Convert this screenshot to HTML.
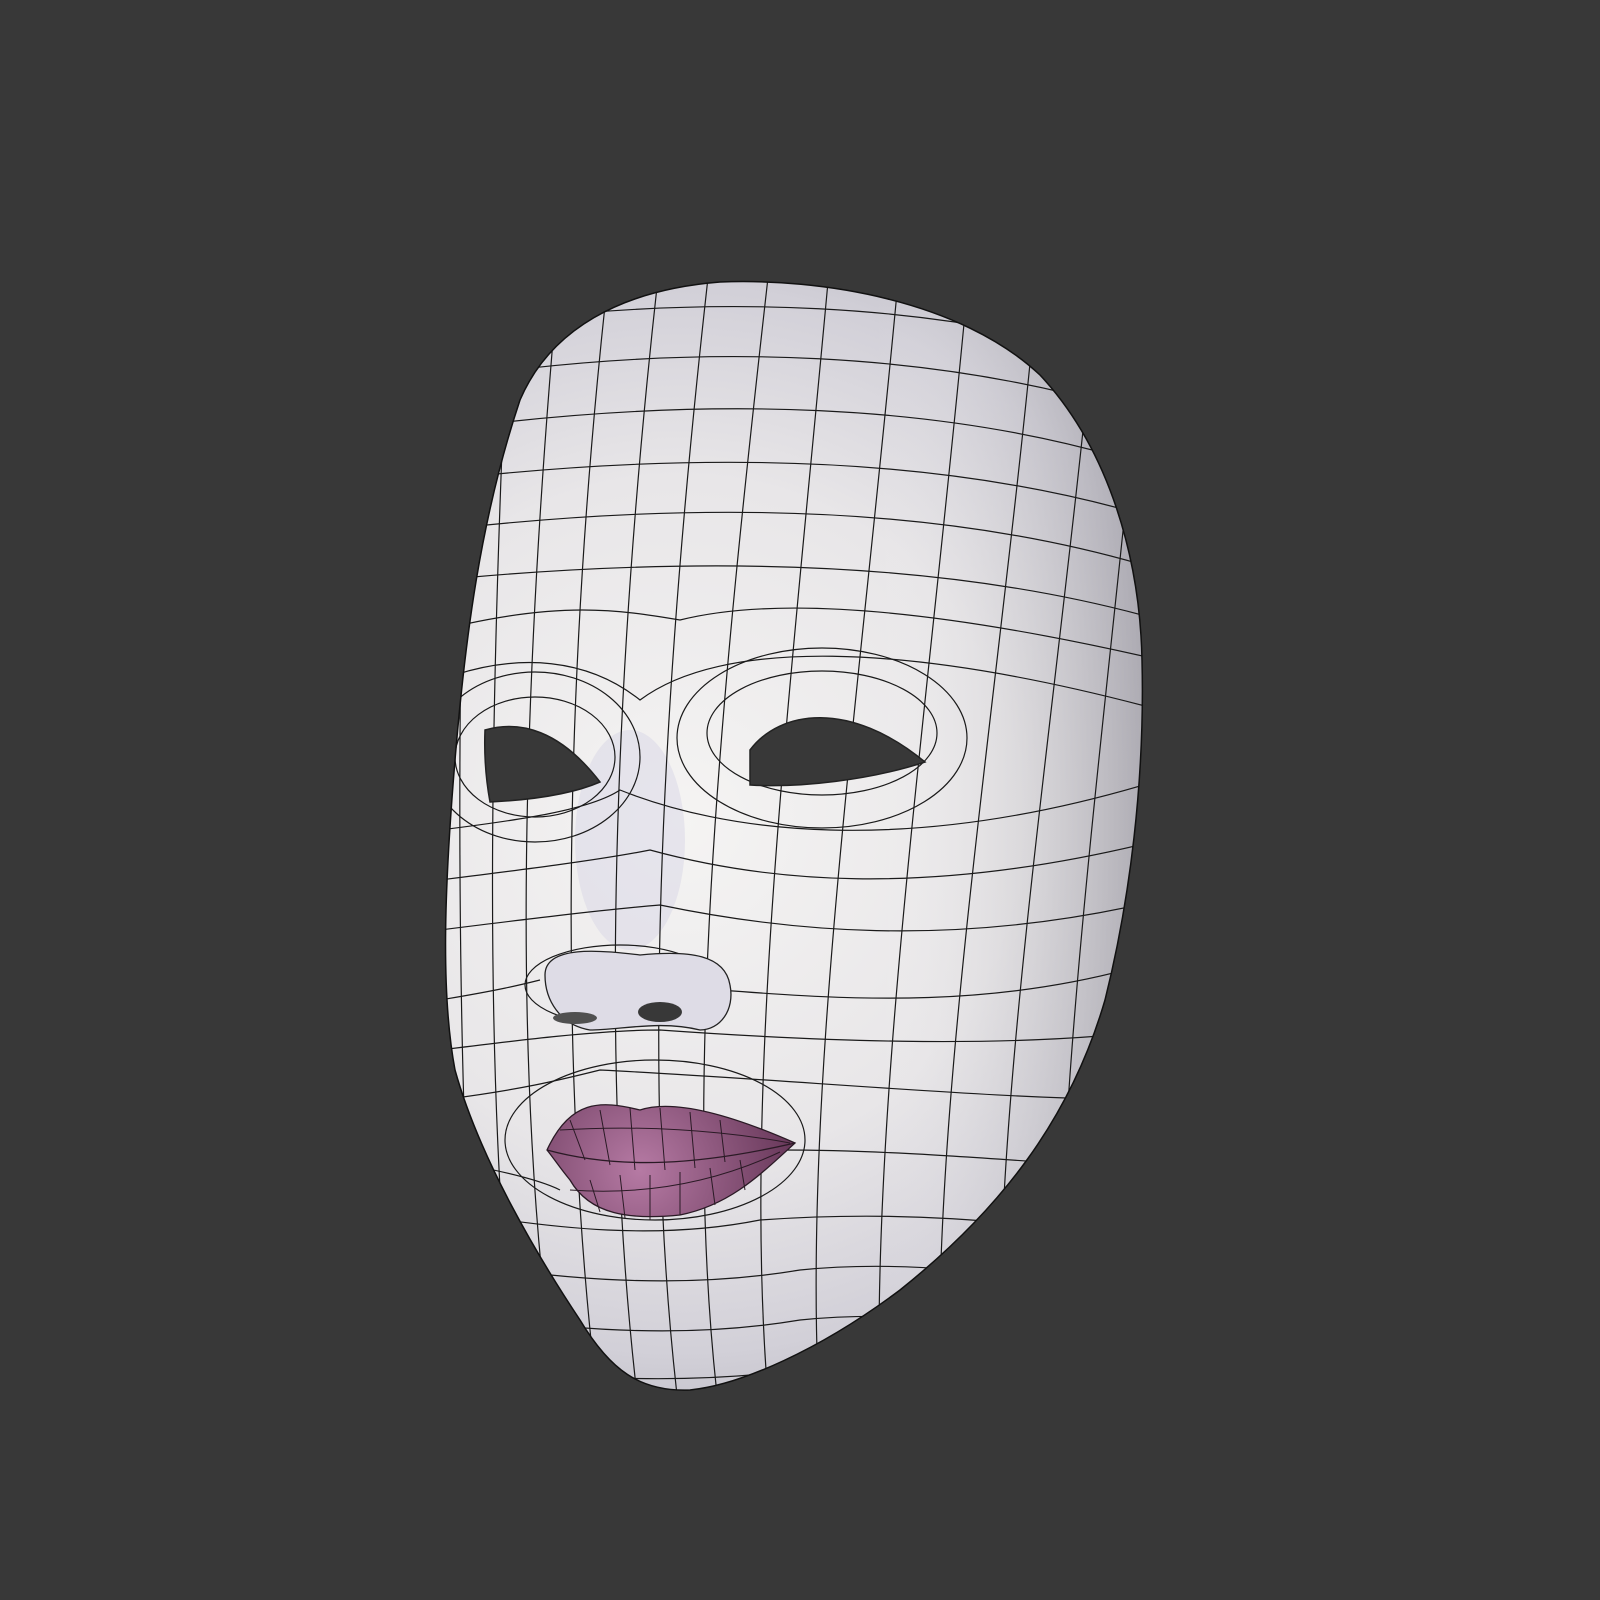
<!DOCTYPE html>
<html><head><style>
html,body{margin:0;padding:0;background:#383838;width:1600px;height:1600px;overflow:hidden}
svg{display:block}
</style></head><body>
<svg width="1600" height="1600" viewBox="0 0 1600 1600" xmlns="http://www.w3.org/2000/svg">
<defs>
<radialGradient id="g1" cx="680" cy="820" r="760" gradientUnits="userSpaceOnUse">
<stop offset="0" stop-color="#f5f4f3"/>
<stop offset="0.45" stop-color="#e8e6e8"/>
<stop offset="0.7" stop-color="#d2d0d8"/>
<stop offset="1" stop-color="#a4a2ac"/>
</radialGradient>
<linearGradient id="g2" x1="440" y1="0" x2="1160" y2="0" gradientUnits="userSpaceOnUse">
<stop offset="0" stop-color="#fff" stop-opacity="0"/>
<stop offset="0.6" stop-color="#fff" stop-opacity="0"/>
<stop offset="1" stop-color="#6a6872" stop-opacity="0.45"/>
</linearGradient>
<radialGradient id="lip" cx="640" cy="1170" r="150" gradientUnits="userSpaceOnUse">
<stop offset="0" stop-color="#b67aa4"/>
<stop offset="1" stop-color="#6a3a5c"/>
</radialGradient>
<clipPath id="mask">
<path id="outline" d="M720 282 C820 278 960 300 1040 375 C1110 450 1140 560 1142 660 C1145 780 1130 900 1105 1000 C1070 1120 1000 1210 900 1290 C820 1350 740 1385 690 1390 C640 1392 610 1370 580 1320 C540 1260 480 1160 455 1070 C440 990 445 880 455 760 C465 640 480 520 520 400 C550 330 620 290 720 282 Z"/>
</clipPath>
</defs>
<rect width="1600" height="1600" fill="#383838"/>
<g clip-path="url(#mask)">
<rect width="1600" height="1600" fill="url(#g1)"/>
<rect x="440" y="270" width="720" height="1130" fill="url(#g2)"/>
<ellipse cx="630" cy="840" rx="55" ry="110" fill="#d8d6e6" opacity="0.5"/>
<g fill="none" stroke="#1a1a1a" stroke-width="1.2">
<path d="M440 330 C700 290 950 300 1160 370"/>
<path d="M440 380 C700 340 950 350 1160 420"/>
<path d="M440 430 C700 395 950 400 1160 470"/>
<path d="M440 480 C700 450 950 455 1160 520"/>
<path d="M440 530 C700 500 950 505 1160 570"/>
<path d="M440 580 C700 555 950 560 1160 620"/>
<path d="M440 630 C560 600 620 610 680 620 C760 600 900 600 1160 660"/>
<path d="M440 680 C520 650 590 660 640 700 C720 640 900 640 1160 710"/>
<path d="M440 830 C520 820 590 810 620 790 C720 830 900 860 1160 780"/>
<path d="M440 880 C520 870 600 860 650 850 C760 880 920 900 1160 840"/>
<path d="M440 930 C520 920 600 910 660 905 C780 930 950 950 1160 900"/>
<path d="M440 1000 C500 990 520 985 540 980 M720 990 C850 1000 1000 1010 1160 960"/>
<path d="M440 1050 C520 1040 600 1030 660 1030 C800 1040 1000 1050 1160 1030"/>
<path d="M440 1100 C520 1090 560 1080 600 1070 C800 1080 1000 1100 1160 1100"/>
<path d="M440 1160 C500 1170 540 1180 560 1190 M780 1150 C900 1150 1000 1160 1160 1170"/>
<path d="M440 1210 C560 1230 660 1240 760 1220 C900 1210 1000 1220 1160 1240"/>
<path d="M440 1260 C560 1280 680 1290 800 1270 C900 1260 1000 1270 1160 1300"/>
<path d="M440 1310 C560 1330 680 1340 800 1320 C900 1310 1000 1320 1160 1350"/>
<path d="M440 1360 C560 1380 680 1385 800 1370"/>
<path d="M470 260 C455 700 455 1100 480 1420"/>
<path d="M510 260 C490 700 480 1100 520 1420"/>
<path d="M560 260 C520 700 510 1100 560 1420"/>
<path d="M610 260 C560 700 560 1100 600 1420"/>
<path d="M660 260 C610 700 600 1100 640 1420"/>
<path d="M710 260 C660 700 640 1100 680 1420"/>
<path d="M770 260 C720 700 680 1100 720 1420"/>
<path d="M830 260 C790 700 740 1100 770 1420"/>
<path d="M900 260 C860 700 800 1100 820 1420"/>
<path d="M970 260 C930 700 870 1100 880 1420"/>
<path d="M1040 260 C1000 700 930 1100 940 1420"/>
<path d="M1100 260 C1060 700 990 1100 1000 1420"/>
<path d="M1150 260 C1110 700 1050 1100 1060 1420"/>
<ellipse cx="535" cy="757" rx="80" ry="60"/>
<ellipse cx="535" cy="757" rx="105" ry="85"/>
<ellipse cx="822" cy="733" rx="115" ry="62"/>
<ellipse cx="822" cy="738" rx="145" ry="90"/>
<ellipse cx="620" cy="985" rx="95" ry="40"/>
<ellipse cx="655" cy="1140" rx="150" ry="80"/>
</g>
</g>
<use href="#outline" fill="none" stroke="#111" stroke-width="1.5"/>
<path d="M485 730 C520 720 560 730 600 782 C570 795 530 800 490 802 C486 780 484 755 485 730Z" fill="#383838" stroke="#222" stroke-width="1.5"/>
<path d="M750 750 C780 710 850 700 925 762 C870 780 800 788 750 785 Z" fill="#383838" stroke="#222" stroke-width="1.5"/>
<path d="M545 975 C545 945 600 950 640 955 C690 950 725 955 730 985 C735 1010 720 1030 700 1030 C660 1020 620 1030 590 1030 C560 1025 545 1000 545 975Z" fill="#dedce6" stroke="#222" stroke-width="1.3"/>
<ellipse cx="660" cy="1012" rx="22" ry="10" fill="#383838"/>
<ellipse cx="575" cy="1018" rx="22" ry="6" fill="#505050"/>
<path d="M547 1150 C570 1100 600 1100 640 1110 C670 1100 720 1110 795 1143 C760 1175 730 1205 680 1215 C630 1220 590 1215 570 1180 C560 1168 555 1160 547 1150Z" fill="url(#lip)" stroke="#2a1a25" stroke-width="1.3"/>
<path d="M547 1150 C620 1170 700 1165 795 1143" fill="none" stroke="#2a1a25" stroke-width="1.3"/>
<g fill="none" stroke="#2a1a25" stroke-width="1">
<path d="M570 1120 L585 1160 M600 1110 L610 1165 M630 1108 L635 1170 M660 1108 L665 1170 M690 1112 L695 1168 M720 1120 L725 1162"/>
<path d="M590 1180 L600 1212 M620 1175 L625 1218 M650 1175 L650 1220 M680 1172 L680 1215 M710 1168 L715 1205 M740 1160 L745 1190"/>
<path d="M560 1130 C640 1125 720 1130 790 1143 M570 1190 C640 1195 710 1185 780 1152"/>
</g>
</svg>
</body></html>
